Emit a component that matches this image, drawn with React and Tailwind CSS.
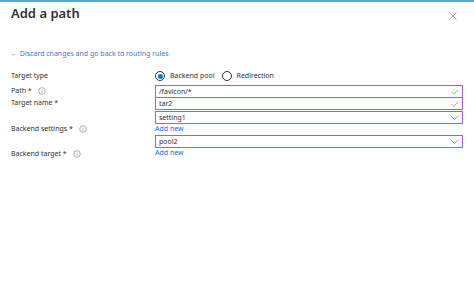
import React from "react";

const font = { fontFamily: '"Noto Sans", "Liberation Sans", sans-serif' };

function Info() {
  return (
    <svg width="8" height="8" viewBox="0 0 8 8" className="ml-[6px] inline-block">
      <circle cx="4" cy="4" r="3.3" fill="none" stroke="#8a8886" strokeWidth="0.7" />
      <path d="M4 3.5v2M4 2.3v0.5" stroke="#8a8886" strokeWidth="0.7" />
    </svg>
  );
}

function Check() {
  return (
    <svg width="8" height="6" viewBox="0 0 8 6" className="mr-[3px]">
      <path d="M0.8 3.2l2 2 4.4-4.4" fill="none" stroke="#7cc06a" strokeWidth="0.9" />
    </svg>
  );
}

function Chevron() {
  return (
    <svg width="9" height="5" viewBox="0 0 9 5" className="mr-[3px]">
      <path d="M0.5 0.5l4 4 4-4" fill="none" stroke="#8a8886" strokeWidth="0.8" />
    </svg>
  );
}

function Field({ value, icon }) {
  return (
    <div className="flex h-[13px] items-center justify-between border border-[#a45fc8] bg-white pl-[3px] text-[7px] leading-none text-[#323130]">
      <span>{value}</span>
      {icon === "check" ? <Check /> : <Chevron />}
    </div>
  );
}

function Radio({ checked, label }) {
  return (
    <label className="flex items-center">
      <span className="flex h-[10px] w-[10px] items-center justify-center rounded-full border border-[#323130]">
        {checked && <span className="h-[5px] w-[5px] rounded-full bg-[#0078d4]" />}
      </span>
      <span className="ml-[5px] text-[7px] text-[#323130]">{label}</span>
    </label>
  );
}

export default function App() {
  return (
    <div className="h-[306px] w-[474px] overflow-hidden bg-white" style={font}>
      <div className="h-[2px] bg-[#5aa6e0]" />
      <div className="flex items-center justify-between pl-[11px] pr-[17px] pt-[2px]">
        <h1 className="text-[13px] font-semibold leading-[18px] text-[#323130]">Add a path</h1>
        <svg width="8" height="8" viewBox="0 0 8 8" className="mt-[5px]">
          <path d="M0.5 0.5l7 7M7.5 0.5l-7 7" stroke="#8a8886" strokeWidth="0.8" />
        </svg>
      </div>
      <div className="mt-[27px] pl-[11px] text-[7px] leading-[10px] text-[#3b7cc4]">
        ← Discard changes and go back to routing rules
      </div>
      <div className="mt-[11px] flex pl-[11px] text-[7px] text-[#323130]">
        <div className="w-[144px] leading-[12px]">
          <div className="mt-[0px]">Target type</div>
          <div className="mt-[3px] flex items-center">Path *<Info /></div>
          <div className="mt-[0px]">Target name *</div>
          <div className="mt-[14px] flex items-center">Backend settings *<Info /></div>
          <div className="mt-[13px] flex items-center">Backend target *<Info /></div>
        </div>
        <div className="w-[308px]">
          <div className="-mt-[1px] flex h-[14px] items-center gap-[7px]">
            <Radio checked label="Backend pool" />
            <Radio label="Redirection" />
          </div>
          <div className="mt-[2px] flex flex-col">
            <Field value="/favicon/*" icon="check" />
            <div className="-mt-px"><Field value="tar2" icon="check" /></div>
            <div className="mt-px"><Field value="setting1" /></div>
          </div>
          <div className="text-[7px] leading-[10px] text-[#0078d4]">Add new</div>
          <div className="mt-[1px]"><Field value="pool2" /></div>
          <div className="text-[7px] leading-[10px] text-[#0078d4]">Add new</div>
        </div>
      </div>
    </div>
  );
}
